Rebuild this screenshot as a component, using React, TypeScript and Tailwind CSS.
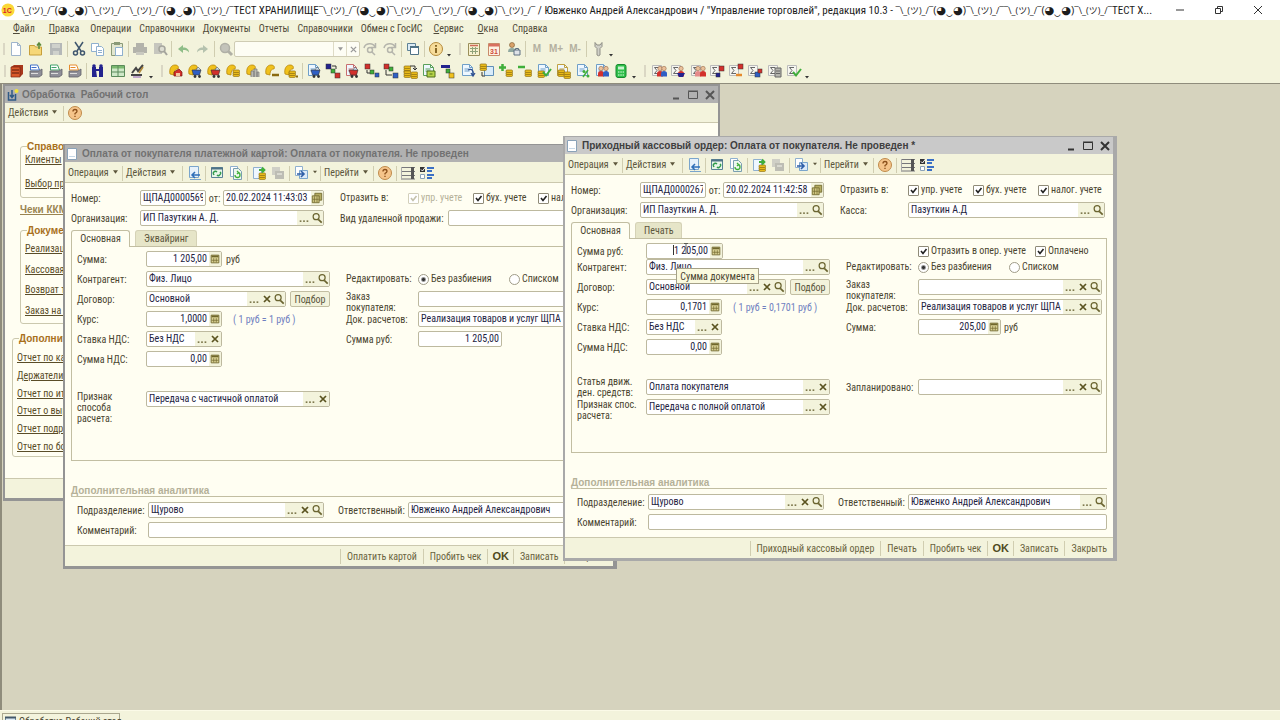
import React, { useId } from "react";
import clsx from "clsx";

type Btn = "dots" | "clear" | "find" | "calc" | "date";

const C = {
    red: "#d2302c",
    blue: "#2f5fc4",
    navy: "#23238e",
    green: "#3fae3a",
    yellow: "#f0c11c",
    orange: "#e58a2c",
};

/* ---------- icon parts, all on a 16x16 grid ---------- */

const Doc = ({ line = "#6f9fc8" }: { line?: string }) => (
    <g>
        <path d="M2.5 1.5h7l3 3v8h-10z" fill="#eef7ff" stroke={line} />
        <path d="M9.5 1.5v3h3M4.5 6h5M4.5 8h5" fill="none" stroke={line} />
    </g>
);

const Sigma = () => (
    <g>
        <path d="M1.5 2.5h9v10h-9z" fill="#f6f6f0" stroke="#bbb" />
        <path d="M8 4.5H3.5l2.5 3-2.5 3H8" fill="none" stroke="#666" />
    </g>
);

const Coin = ({ x = 8, y = 8 }: { x?: number; y?: number }) => (
    <g fill={C.yellow} stroke="#8a6a10" strokeWidth="0.7">
        <rect x={x} y={y + 4} width="6.5" height="2.4" rx="1" />
        <rect x={x} y={y + 2} width="6.5" height="2.4" rx="1" />
        <rect x={x} y={y} width="6.5" height="2.4" rx="1" />
    </g>
);

const Purse = () => (
    <path d="M2 11c-1-5 1-9 5-9 3 0 4 2 3 4-2 0-4 1-4 6z" fill={C.yellow} stroke="#b8860b" strokeWidth="0.8" />
);

const Cart = ({ c }: { c: string }) => (
    <g>
        <path d="M5 7h9l-1.500 5h-6z" fill={c} stroke="#333" strokeWidth="0.6" />
        <circle cx="8" cy="13.500" r="1.400" fill="#333" />
        <circle cx="12.500" cy="13.500" r="1.400" fill="#333" />
        <path d="M9 7l2-3 3 3z" fill="#cfe3f8" stroke="#555" strokeWidth="0.6" />
    </g>
);

const Person = ({ c, x = 8 }: { c: string; x?: number }) => (
    <g>
        <circle cx={x + 3} cy="5.500" r="2.200" fill="#eac09a" stroke="#8a5a3a" strokeWidth="0.5" />
        <path d={`M${x} 13.500v-3q0-2.500 3-2.500t3 2.500v3z`} fill={c} />
    </g>
);

const Block = ({ c, x, y, s = 5 }: { c: string; x: number; y: number; s?: number }) => (
    <rect x={x} y={y} width={s} height={s} fill={c} stroke="#333" strokeWidth="0.5" />
);

const Check = () => <path d="M7 9l3 3.500 5-6.500" fill="none" stroke={C.green} strokeWidth="2" />;

const CashBox = ({ c }: { c: string }) => (
    <g>
        <path d="M2.500 2h7l2 5h-9z" fill="#fff" stroke={c} />
        <path d="M3.500 4.500h5" stroke={c} />
        <path d="M2 8h9l3-2v6l-3 2H2z" fill="#8f8f98" stroke="#5f5f68" strokeWidth="0.8" />
        <path d="M3 10.500h7" stroke="#ddd" />
    </g>
);

function Svg({ children }: { children: React.ReactNode }) {
    return (
        <svg viewBox="0 0 16 16" className="w-4 h-4 shrink-0" aria-hidden="true">
            {children}
        </svg>
    );
}

function IconButton({ label, children }: { label: string; children: React.ReactNode }) {
    return (
        <button type="button" aria-label={label} className="w-4 h-4 shrink-0 flex items-center justify-center">
            <Svg>{children}</Svg>
        </button>
    );
}

function IconGroup({ name, icons, className }: { name: string; icons: React.ReactNode[]; className?: string }) {
    return (
        <div className={clsx("flex items-center justify-between shrink-0", className)}>
            {icons.map((icon, i) => (
                <IconButton key={i} label={`${name} ${i + 1}`}>
                    {icon}
                </IconButton>
            ))}
        </div>
    );
}

const Sep = () => (
    <span className="w-[7px] h-4 shrink-0 flex justify-center">
        <span className="w-px bg-[#d0cdb0]" />
    </span>
);

const Handle = ({ first }: { first?: boolean }) => (
    <span className={clsx("h-3 shrink-0 flex justify-center", first ? "w-2" : "w-3")}>
        <span className="w-0.5 bg-[#dad7c4]" />
    </span>
);

const More = () => (
    <button type="button" aria-label="Ещё" className="w-2.5 h-4 shrink-0 flex items-end justify-center">
        <svg viewBox="0 0 6 4" className="w-1.5 h-1">
            <path d="M1 1h4L3 3.500z" fill="#333" />
        </svg>
    </button>
);

const Caret = () => (
    <svg viewBox="0 0 6 4" className="w-[5px] h-1 ml-1 mb-0.5 inline-block">
        <path d="M0 0h6L3 4z" fill="#5c563c" />
    </svg>
);

/* ---------- main toolbars ---------- */

const fileIcons = [
    <path d="M3.500 1.500h6l3 3v10h-9z M9.500 1.500v3h3" fill="#fff" stroke="#9fb4cc" />,
    <g>
        <path d="M1.500 4.500h5l1 1.500h6v8h-12z" fill="#f6d778" stroke="#c79f3a" />
        <path d="M11 8V3M9 4.500l2-2.500 2 2.500" fill="none" stroke="#5c8a3a" strokeWidth="1.500" />
    </g>,
    <g>
        <path d="M2 2h12v12H2z" fill="#b5b8b8" />
        <path d="M4 3h8v4H4zM5 10h6v4H5z" fill="#cfd1cc" />
    </g>,
];

const editIcons = [
    <g fill="none" stroke="#3f566e" strokeWidth="1.500">
        <path d="M4 1l6 9M12 1L6 10" />
        <circle cx="4.500" cy="12" r="2" />
        <circle cx="11.500" cy="12" r="2" />
    </g>,
    <g fill="#fff" stroke="#8fb0cf">
        <path d="M1.500 2.500h7v8h-7z" />
        <path d="M6.500 5.500h5l2 2v7h-7zM8 9.500h4M8 11.500h4" />
    </g>,
    <g>
        <path d="M2.500 2.500h11v12h-11z" fill="#e2e6cf" stroke="#8a9a78" />
        <path d="M5 1h6v3H5z" fill="#8a9a78" />
        <path d="M6.500 6.500h7v8h-7z" fill="#fff" stroke="#8fb0cf" />
    </g>,
];

const printIcons = [
    <g fill="#b3b3ab">
        <path d="M4 2h8v4H4z" />
        <path d="M1 6h14v6H1z" />
        <path d="M4 11h8v3H4z" fill="#c9c9c0" />
    </g>,
    <g>
        <path d="M2 2h8v11H2z" fill="#c6c6be" />
        <circle cx="10" cy="8" r="3" fill="#ddddd2" stroke="#a5a59d" strokeWidth="1.500" />
        <path d="M12 10l3 4" stroke="#a5a59d" strokeWidth="2" />
    </g>,
];

const undoIcons = [
    <path d="M3 8l5-4v2.500c4 0 6 2 6 5-1.500-2-3-2.500-6-2.500V12z" fill="#8fbd88" />,
    <path d="M13 8L8 4v2.500c-4 0-6 2-6 5 1.500-2 3-2.500 6-2.500V12z" fill="#b5c2ae" />,
];

const findArrow = (
    <g fill="none" stroke="#b5b5ac" strokeWidth="1.500">
        <path d="M2 7c1-5 9-6 11-1M13.500 2v4.500H9" />
        <circle cx="8" cy="9" r="2.500" />
        <path d="M10 11l3 3" />
    </g>
);

const serviceIcons = [
    <g>
        <path d="M2.500 2.500h11v12h-11z" fill="#f7f1d0" stroke="#9a8f5a" />
        <path d="M4 4.500h8" stroke="#cf6a5a" strokeWidth="1.500" />
        <path d="M4 7.500h8M4 10.500h8M6.500 6v7M9.500 6v7" stroke="#8fa37a" />
    </g>,
    <g>
        <path d="M2.500 2.500h11v12h-11z" fill="#fdf2e2" stroke="#c98a6a" />
        <path d="M3 3h10v2.500H3z" fill="#d9705f" />
        <text x="4" y="13" fontSize="7" fontWeight="700" fill="#cf4a3a" fontFamily="Liberation Sans">31</text>
    </g>,
    <g>
        <circle cx="6" cy="4" r="2.500" fill="#d9a26a" stroke="#77582e" strokeWidth="0.600" />
        <path d="M2 11q0-4 4-4t4 4z" fill="#8fa8a0" />
        <path d="M8 9h6v5H8z" fill="#dfe3e8" stroke="#5f7082" />
        <path d="M9.500 9V7.500h3V9" fill="none" stroke="#5f7082" />
    </g>,
];

const deskIcons = [
    <g>
        <path d="M2 4l3-2h9v9l-3 3H2z" fill="#a8381c" />
        <path d="M2 4h9v10H2z" fill="#d95a2a" stroke="#7a240f" strokeWidth="0.700" />
        <path d="M3 7h7M3 10h7" stroke="#5a1a0a" />
    </g>,
    <CashBox c="#3f6fc8" />,
    <CashBox c="#3fa06a" />,
    <CashBox c="#e58a2c" />,
];

const viewIcons = [
    <g fill={C.navy}>
        <path d="M2 4h4v3l1 7H2zM9 4h4v10H9z" />
        <circle cx="4" cy="3" r="1.800" />
        <circle cx="11" cy="3" r="1.800" />
        <path d="M6 6h4v2H6z" />
    </g>,
    <g>
        <path d="M1.500 2.500h13v11h-13z" fill="#cfe8c8" stroke="#5a8a5a" />
        <path d="M2 3h12v2.500H2z" fill="#7ab86f" />
        <path d="M8 2v12M2 9h12" stroke="#5a8a5a" />
    </g>,
    <g>
        <path d="M1 12h11M2 10l4-5 2 3 5-6" fill="none" stroke="#444" strokeWidth="2" />
        <path d="M9 10l4-6" stroke="#b0893a" strokeWidth="1.500" />
        <path d="M3 14h8" stroke="#8c5ab8" />
    </g>,
];

const moneyIcons = [
    <g><Purse /><path d="M6 9l5-3 3 3v4H6z" fill={C.red} stroke="#7a1410" strokeWidth="0.700" /><path d="M8 10h4v3H8z" fill="#f3c9a0" /></g>,
    <g><Purse /><Cart c={C.blue} /></g>,
    <g><Purse /><Cart c={C.red} /></g>,
    <g><Purse /><Coin x={8} y={7} /></g>,
    <g><Purse /><path d="M6 14V8h3v6M9 14V6h3v8M12 14V9h2v5" fill="#b9b9b0" stroke="#777" strokeWidth="0.700" /></g>,
    <g><Purse /><path d="M8 12h7" stroke="#8a6a10" strokeWidth="2.500" /></g>,
    <g><Purse /><Coin x={6} y={8} /><path d="M13 13.500h2" stroke="#8a6a10" strokeWidth="2" /></g>,
];

const tradeIcons = [
    <g><Doc /><Cart c={C.blue} /></g>,
    <g><Block c={C.navy} x={1} y={1} /><Block c={C.green} x={6} y={6} s={4} /><Block c={C.red} x={10} y={10} /><path d="M7 3h4v3" fill="none" stroke="#333" /></g>,
    <g><Doc line="#c86f6f" /><Cart c={C.red} /></g>,
    <g><Block c={C.red} x={1} y={1} /><Block c={C.green} x={6} y={7} s={4} /><Block c={C.blue} x={11} y={10} s={4} /><path d="M3 7v3h3" fill="none" stroke="#333" /></g>,
    <g><Block c={C.red} x={1} y={1} /><Block c={C.green} x={6} y={4} s={4} /><Block c={C.blue} x={10} y={10} /><path d="M3 7v5h6" fill="none" stroke="#333" /></g>,
    <g><Coin x={2} y={3} /><Coin x={2} y={8} /><Coin x={9} y={9} /><path d="M8 3h5v4M11 5l2 2 2-2" fill="none" stroke="#333" /></g>,
    <g><Doc line="#5aa05a" /><path d="M6 8h8v6H6z" fill="#b6d34a" stroke="#4f6f1a" /><path d="M8.500 11h3" stroke="#4f6f1a" /></g>,
    <g><path d="M1 2h9v3H1z" fill={C.navy} /><Block c={C.green} x={6} y={6} s={4} /><Block c={C.yellow} x={9} y={10} /></g>,
    <g><Doc /><path d="M8 7c4-2 6 1 5 5M11 10l2 3 2-3" fill="none" stroke="#2f4f8f" strokeWidth="1.300" /></g>,
    <g><path d="M5.500 3.500h9v9h-9z" fill="#d9ecfa" stroke="#5f8fb8" /><Coin x={1} y={1} /><path d="M3 9v4h3" fill="none" stroke="#333" /></g>,
    <g><path d="M4.500 1v7M1 4.500h7" stroke={C.green} strokeWidth="2.500" /><Coin x={8} y={7} /></g>,
    <g><path d="M1 4h7" stroke={C.green} strokeWidth="2.500" /><Coin x={8} y={7} /></g>,
    <g><Doc /><Coin x={2} y={8} /><Check /></g>,
    <g><Doc line="#c0a040" /><Coin x={3} y={7} /><Coin x={9} y={9} /></g>,
    <g><Doc /><path d="M8 14l5-7" stroke={C.green} strokeWidth="1.500" /><circle cx="9" cy="8.500" r="1.500" fill={C.green} /><circle cx="13" cy="13" r="1.500" fill={C.green} /></g>,
    <g><Doc /><Person c={C.red} x={4} /><Person c={C.blue} x={9} /></g>,
    <g>
        <rect x="3" y="1.500" width="10" height="13" rx="2" fill="#2fbf4a" stroke="#178a2e" />
        <path d="M5 3.500h6v3H5z" fill="#c9f2cf" />
        <path d="M5 9h6M5 12h6" stroke="#e6ffe8" strokeDasharray="1.500 0.800" />
    </g>,
];

const reportIcons = [
    <g><Sigma /><Person c={C.red} x={6} /><Person c={C.blue} x={10} /></g>,
    <g><Sigma /><Person c={C.red} x={8} /><path d="M7 10h8l-2 4H9z" fill={C.navy} /></g>,
    <g><Sigma /><Person c="#e58a8a" x={5} /><Person c={C.red} x={10} /></g>,
    <g><Sigma /><Block c={C.red} x={10} y={3} /><Block c={C.navy} x={7} y={10} s={4} /></g>,
    <g><Sigma /><Block c={C.red} x={10} y={1} /><path d="M8 12h6" stroke={C.orange} strokeWidth="2.500" /></g>,
    <g><Sigma /><Block c={C.blue} x={8} y={9} /><Block c={C.red} x={11} y={6} s={4} /></g>,
    <g><Sigma /><path d="M8 5h6v9H8z" fill="#b5b5ae" stroke="#666" /><path d="M9 8h4M9 10.500h4" stroke="#666" /></g>,
    <g><Sigma /><Check /></g>,
];

function MainToolbars() {
    return (
        <div className="pb-px">
            <div className="flex items-center h-[22px]">
                <Handle first />
                <IconGroup name="Файл" icons={fileIcons} className="w-14" />
                <Sep />
                <IconGroup name="Правка" icons={editIcons} className="w-[54px]" />
                <Sep />
                <IconGroup name="Печать" icons={printIcons} className="w-9" />
                <Sep />
                <IconGroup name="Отмена" icons={undoIcons} className="w-9" />
                <Sep />
                <IconButton label="Найти">
                    <circle cx="7" cy="7" r="4.500" fill="#c3c3ba" stroke="#b0b0a6" strokeWidth="1.500" />
                    <path d="M10 10l4 4" stroke="#b0b0a6" strokeWidth="3" />
                </IconButton>
                <div className="flex items-stretch w-[126px] h-4 shrink-0 border border-[#cfccb4] rounded-[2px] bg-[#fdfdf4]">
                    <input aria-label="Строка поиска" className="flex-1 min-w-0 px-1 outline-none" />
                    <button type="button" aria-label="История" className="w-[13px] flex items-center justify-center border-l border-[#dedbc6]">
                        <svg viewBox="0 0 6 4" className="w-[5px] h-1"><path d="M0 0h6L3 4z" fill="#999" /></svg>
                    </button>
                    <button type="button" aria-label="Очистить" className="w-[13px] flex items-center justify-center border-l border-[#dedbc6]">
                        <svg viewBox="0 0 8 8" className="w-[7px] h-[7px]"><path d="M1 1l6 6M7 1L1 7" stroke="#999" strokeWidth="1.500" /></svg>
                    </button>
                </div>
                <IconGroup name="Искать" icons={[findArrow, findArrow]} className="w-9 ml-0.5" />
                <Sep />
                <IconButton label="Окна">
                    <path d="M2.500 2.500h8v7h-8z" fill="#dcebf5" stroke="#5f8296" />
                    <path d="M5.500 5.500h8v8h-8z" fill="#fff" stroke="#4f7286" />
                    <path d="M5 6h9" stroke="#4f7286" strokeWidth="2" />
                </IconButton>
                <Sep />
                <IconButton label="О программе">
                    <circle cx="8" cy="8" r="6.500" fill="#f6dc9a" stroke="#b58a3a" />
                    <path d="M8 7v5M8 4v1.800" stroke="#7a5a1a" strokeWidth="1.800" />
                </IconButton>
                <More />
                <Handle />
                <IconGroup name="Сервис" icons={serviceIcons} className="w-14" />
                <Sep />
                <div className="flex justify-between w-[54px] shrink-0 font-['Liberation_Sans',sans-serif] font-bold text-[10px] text-[#b3b0a0]">
                    <button type="button" className="w-4">M</button>
                    <button type="button" className="w-4">M+</button>
                    <button type="button" className="w-4">M-</button>
                </div>
                <Sep />
                <IconButton label="Настройка">
                    <path d="M5 1.500v4l2 2V14q1.500 1.500 3 0V7.500l2-2v-4l-2 2.500H7z" fill="#d0d0c8" stroke="#8f8f86" />
                </IconButton>
                <More />
            </div>
            <div className="flex items-center h-[22px] pl-px">
                <Handle first />
                <IconGroup name="Касса" icons={deskIcons} className="w-[74px]" />
                <Sep />
                <IconGroup name="Вид" icons={viewIcons} className="w-14" />
                <More />
                <Handle />
                <IconGroup name="Деньги" icons={moneyIcons} className="w-[131px]" />
                <Sep />
                <IconGroup name="Торговля" icons={tradeIcons} className="w-[323px]" />
                <More />
                <Handle />
                <IconGroup name="Отчет" icons={reportIcons} className="w-[151px]" />
                <More />
            </div>
        </div>
    );
}

const menu: [string, string, string][] = [
    ["", "Ф", "айл"],
    ["", "П", "равка"],
    ["Операции", "", ""],
    ["Справочники", "", ""],
    ["Документы", "", ""],
    ["Отчеты", "", ""],
    ["Справочники", "", ""],
    ["Обмен с ГосИС", "", ""],
    ["", "С", "ервис"],
    ["", "О", "кна"],
    ["Сп", "р", "авка"],
];

/* ---------- title of the program ---------- */

function Faces() {
    return (
        <span className="font-['Open_Sans','Noto_Sans_CJK_JP',sans-serif] text-[9px]">
            ¯\_(ツ)_/¯<span className="font-['Open_Sans','DejaVu_Serif',serif] text-[11px]">(◕‿◕)</span>¯\_(ツ)_/¯
        </span>
    );
}

function TitleBar() {
    return (
        <header className="flex items-center h-5 pr-[3px] bg-white text-[11px] text-[#1c1c1c]">
            <svg viewBox="0 0 16 16" className="w-3.5 h-3.5 ml-px mr-0.5 shrink-0" aria-hidden="true">
                <circle cx="8" cy="8" r="7.500" fill="#fbd837" />
                <text x="2" y="11" fontSize="8" fontWeight="700" fill="#d8232a" fontFamily="Liberation Sans">1С</text>
            </svg>
            <h1 className="flex-1 min-w-0 whitespace-nowrap overflow-hidden leading-5">
                <Faces /><Faces />ТЕСТ ХРАНИЛИЩЕ<Faces /><Faces /> / Ювженко Андрей Александрович / "Управление торговлей", редакция 10.3 - <Faces /><Faces />ТЕСТ Х...
            </h1>
            <div className="flex shrink-0">
                <button type="button" aria-label="Свернуть" className="w-[39px] h-5 flex items-center justify-center">
                    <svg viewBox="0 0 10 10" className="w-2.5 h-2.5"><path d="M1 5h8" stroke="#333" /></svg>
                </button>
                <button type="button" aria-label="Развернуть" className="w-[39px] h-5 flex items-center justify-center">
                    <svg viewBox="0 0 10 10" className="w-2.5 h-2.5"><path d="M1.500 3.500h5v5h-5zM3.500 3V1.500h5v5H7" fill="none" stroke="#333" /></svg>
                </button>
                <button type="button" aria-label="Закрыть" className="w-[39px] h-5 flex items-center justify-center">
                    <svg viewBox="0 0 10 10" className="w-2.5 h-2.5"><path d="M1 1l8 8M9 1L1 9" stroke="#333" /></svg>
                </button>
            </div>
        </header>
    );
}

/* ---------- form controls ---------- */

const btnArt: Record<Btn, React.ReactNode> = {
    dots: <path d="M2 10h2v1.500H2zM6 10h2v1.500H6zM10 10h2v1.500h-2z" fill="#5a5320" />,
    clear: <path d="M3.500 3.500l7 7M10.500 3.500l-7 7" stroke="#5a5320" strokeWidth="2" />,
    find: (
        <g fill="none" stroke="#6a6430">
            <circle cx="6" cy="5.500" r="3.500" strokeWidth="1.400" />
            <path d="M8.500 8.500l4 4" strokeWidth="2" />
        </g>
    ),
    calc: (
        <g>
            <path d="M2.500 2.500h9v9h-9z" fill="#d9d194" stroke="#6f672c" />
            <path d="M3 4h8" stroke="#6f672c" strokeWidth="2" />
            <path d="M5.500 6v5M8.500 6v5M3 8.500h8" stroke="#6f672c" strokeWidth="0.800" />
        </g>
    ),
    date: (
        <g>
            <path d="M4.500 1.500h8v8h-8z" fill="#b5ac62" stroke="#6f672c" />
            <path d="M1.500 4.500h8v8h-8z" fill="#cfc682" stroke="#6f672c" />
            <path d="M4 5v7M7 5v7M2 8.500h7" stroke="#6f672c" strokeWidth="0.800" />
        </g>
    ),
};

const btnName: Record<Btn, string> = {
    dots: "Выбрать",
    clear: "Очистить",
    find: "Открыть",
    calc: "Калькулятор",
    date: "Календарь",
};

function Field({ id, value = "", btns = [], num, className, name }: { id?: string; value?: string; btns?: Btn[]; num?: boolean; className?: string; name?: string }) {
    return (
        <div className={clsx("flex h-4 shrink-0 border border-[#bdb99f] rounded-[2px] bg-white overflow-hidden", className)}>
            <input
                id={id}
                aria-label={name}
                defaultValue={value}
                className={clsx("flex-1 min-w-0 px-0.5 bg-transparent outline-none text-[#23233f]", num && "text-right")}
            />
            {btns.map((b) => (
                <button key={b} type="button" aria-label={btnName[b]} className={clsx("shrink-0 bg-[#f3f3dc] flex items-center justify-center", b === "dots" ? "w-3.5" : "w-3")}>
                    <svg viewBox="0 0 14 14" className="w-3 h-3">{btnArt[b]}</svg>
                </button>
            ))}
        </div>
    );
}

interface RowProps {
    label: string[];
    value?: string;
    btns?: Btn[];
    num?: boolean;
    labelClass?: string;
    fieldClass?: string;
    middle?: boolean;
    className?: string;
    children?: React.ReactNode;
}

function Row({ label, value, btns, num, labelClass = "w-[69px]", fieldClass = "w-[184px]", middle, className, children }: RowProps) {
    const id = useId();
    return (
        <div className={clsx("flex h-4 whitespace-nowrap", middle ? "items-center" : "items-start", className)}>
            <label htmlFor={id} className={clsx("shrink-0", labelClass, label.length > 1 ? "leading-[11px]" : "leading-[18px]")}>
                {label.map((l) => (
                    <span key={l} className="block">{l}</span>
                ))}
            </label>
            <Field id={id} value={value} btns={btns} num={num} className={fieldClass} />
            {children}
        </div>
    );
}

function Tick({ label, disabled, className }: { label: string; disabled?: boolean; className?: string }) {
    return (
        <label className={clsx("flex items-center h-4 gap-0.5 shrink-0 leading-[18px]", disabled && "text-[#b5b199]", className)}>
            <span className="grid">
                <input type="checkbox" defaultChecked disabled={disabled} className="peer [grid-area:1/1] appearance-none w-[11px] h-[11px] border border-[#8f8b78] rounded-[1px] bg-white disabled:border-[#d3d0bb]" />
                <svg viewBox="0 0 11 11" className="[grid-area:1/1] w-[11px] h-[11px] pointer-events-none invisible peer-checked:visible">
                    <path d="M3 5l2 2.500 3.500-4.500" fill="none" stroke={disabled ? "#c5c2ac" : "#222"} strokeWidth="1.600" />
                </svg>
            </span>
            {label}
        </label>
    );
}

function Radio({ label, name, checked, className }: { label: string; name: string; checked?: boolean; className?: string }) {
    return (
        <label className={clsx("flex items-center h-4 gap-0.5 shrink-0 leading-[18px]", className)}>
            <input
                type="radio"
                name={name}
                defaultChecked={checked}
                className="appearance-none w-[11px] h-[11px] rounded-full border border-[#a09c88] bg-white checked:bg-[radial-gradient(circle,#333_1px,#fff_3px)]"
            />
            {label}
        </label>
    );
}

function EditMode({ name }: { name: string }) {
    return (
        <div role="radiogroup" aria-label="Редактировать" className="flex h-4 items-center whitespace-nowrap leading-[18px]">
            <span className="w-[72px] shrink-0">Редактировать:</span>
            <Radio name={name} label="Без разбиения" checked className="w-[91px]" />
            <Radio name={name} label="Списком" />
        </div>
    );
}

/* ---------- windows ---------- */

function WindowTitle({ text, active, buttons, icon }: { text: string; active?: boolean; buttons?: boolean; icon: React.ReactNode }) {
    return (
        <div className={clsx("flex items-center h-[17px] pl-px pr-px", active ? "bg-[#c9c9c9]" : "bg-[#b1b1b1]")}>
            <span className="w-4 shrink-0">{icon}</span>
            <h2 className={clsx("flex-1 font-['Liberation_Sans',sans-serif] font-bold text-[10px] leading-[18px] whitespace-pre", active ? "text-[#3f3f3f]" : "text-[#717171]")}>{text}</h2>
            {buttons && (
                <div className="flex gap-[3px]">
                    {["M3 9.500h6", "M1.500 2.500h9v7h-9zM1 2h10", "M2 2l8 8M10 2l-8 8"].map((d, i) => (
                        <button key={d} type="button" aria-label={["Свернуть", "Развернуть", "Закрыть"][i]} className="w-3.5 h-4 flex items-center justify-center">
                            <svg viewBox="0 0 12 12" className="w-3 h-3">
                                <path d={d} fill="none" stroke={active ? "#333" : "#555"} strokeWidth={i === 1 ? 1 : 2} />
                            </svg>
                        </button>
                    ))}
                </div>
            )}
        </div>
    );
}

const docIcon = (
    <svg viewBox="0 0 12 12" className="w-3 h-3">
        <path d="M1.500 0.500h9v11h-9z" fill="#fff" stroke="#8aa2b8" />
        <path d="M3 8.500h6" stroke="#c6d8e8" />
    </svg>
);

const VLine = () => <span className="w-px h-[15px] bg-[#d0cdb0]" />;

const HelpButton = () => (
    <IconButton label="Справка">
        <circle cx="8" cy="8" r="6.500" fill="#f5c48a" stroke="#bf8a4a" />
        <path d="M6 6.500q0-2 2-2t2 1.800q0 1-2 2.200v1M8 10.800v1.200" fill="none" stroke="#8a4f1a" strokeWidth="1.300" />
    </IconButton>
);

function WindowToolbar() {
    return (
        <div className="flex items-center h-[21px] pl-[3px] pt-0.5 gap-[3px] bg-[#f3f3dc] border-b border-[#cbc8ae] text-[#5c563c] whitespace-nowrap">
            <button type="button" className="w-[51px] text-left">Операция<Caret /></button>
            <VLine />
            <button type="button" className="w-[53px] text-left">Действия<Caret /></button>
            <VLine />
            <IconButton label="Записать">
                <path d="M3.500 1.500h9v11h-9z" fill="#e6f1fb" stroke="#7aa5cc" />
                <path d="M4 14.500h11" stroke="#7aa5cc" />
                <path d="M14 10H6M9 7l-3 3 3 3" fill="none" stroke="#2f6fb8" strokeWidth="1.500" />
            </IconButton>
            <VLine />
            <IconButton label="Обновить">
                <path d="M2.500 2.500h11v10h-11z" fill="#e9f6e9" stroke="#5a8296" />
                <path d="M2 3.500h12" stroke="#4f7286" strokeWidth="2" />
                <path d="M4 8q2-3 4-1M12 8q-2 4-4 2M5 10l-1-2M11 7l1 1" fill="none" stroke="#2f9a4a" strokeWidth="1.500" />
            </IconButton>
            <IconButton label="Скопировать">
                <path d="M2.500 1.500h7v10h-7z" fill="#fff" stroke="#8fb0cf" />
                <path d="M5.500 3.500h5l3 3v8h-8z" fill="#eef7ee" stroke="#7a9fb0" />
                <path d="M7 10a2.500 2.500 0 1 0 2.500-2.500M9 6l1.500 1.500L9 9" fill="none" stroke="#3fae3a" strokeWidth="1.300" />
            </IconButton>
            <VLine />
            <IconButton label="Провести">
                <path d="M2.500 2.500h8v11h-8z" fill="#eef7ff" stroke="#8fb0cf" />
                <Coin x={8} y={8} />
                <path d="M8 5h5M11 2.500L13.500 5 11 7.500" fill="none" stroke="#3fae3a" strokeWidth="1.800" />
            </IconButton>
            <IconButton label="Отменить проведение">
                <path d="M2 2h8v8H2z" fill="#cfcfc6" />
                <path d="M5 6h9v8H5z" fill="#bdbdb4" />
                <path d="M7 9h5" stroke="#d9d9d0" strokeWidth="2" />
            </IconButton>
            <VLine />
            <button type="button" aria-label="На основании" className="flex items-center w-6">
                <Svg>
                    <path d="M2.500 1.500h7v9h-7z" fill="#fff" stroke="#8fb0cf" />
                    <path d="M6.500 5.500h8v8h-8z" fill="#dceaf8" stroke="#7aa5cc" />
                    <path d="M4 9h7M8 6l3 3-3 3" fill="none" stroke="#2f5fa8" strokeWidth="1.600" />
                </Svg>
                <Caret />
            </button>
            <VLine />
            <button type="button" className="w-[46px] text-left">Перейти<Caret /></button>
            <VLine />
            <HelpButton />
            <VLine />
            <IconButton label="Список">
                <path d="M1 2.500h14M1 6.500h14M1 10.500h14M1 14h14" stroke="#77777a" />
                <path d="M12.500 2v12" stroke="#555" strokeWidth="3" />
                <path d="M1.500 2v12" stroke="#aaa" />
            </IconButton>
            <IconButton label="Настройка списка">
                <path d="M1.500 9.500h4v4h-4z" fill="#fff" stroke="#8aa2b8" />
                <path d="M1 2h5v5H1z" fill="#333" />
                <path d="M2 4.500l1.500 1.500 3-4" fill="none" stroke="#fff" />
                <path d="M8 3h7M8 6h5M8 10h7M8 13h5" stroke="#3a6fc4" strokeWidth="1.800" />
            </IconButton>
        </div>
    );
}

interface DocumentWindowProps {
    title: string;
    active?: boolean;
    number: string;
    date: string;
    tabs: [string, string];
    headerSide: React.ReactNode;
    left: React.ReactNode;
    right: React.ReactNode;
    actions: string[];
    className: string;
    children?: React.ReactNode;
}

function DocumentWindow({ title, active, number, date, tabs, headerSide, left, right, actions, className, children }: DocumentWindowProps) {
    return (
        <section
            className={clsx(
                "absolute w-[554px] flex flex-col bg-[#fffef2] border-t border-l-2 border-r-4 border-b-3",
                active ? "border-[#a9a9a9]" : "border-[#949494]",
                className
            )}
        >
            <WindowTitle text={title} active={active} buttons={active} icon={docIcon} />
            <WindowToolbar />
            <div className="px-1.5 pt-[7px] pb-[7px]">
                <div className="flex">
                    <div className="w-[269px] shrink-0 flex flex-col gap-1">
                        <Row label={["Номер:"]} value={number} fieldClass="w-[66px]">
                            <span className="leading-[18px] w-[17px] text-center shrink-0">от:</span>
                            <Field name="Дата" value={date} btns={["date"]} className="w-[101px]" />
                        </Row>
                        <Row label={["Организация:"]} value="ИП Пазуткин А. Д." btns={["dots", "find"]} />
                    </div>
                    <div className="flex-1 min-w-0 flex flex-col gap-1">
                        <div className="flex h-4 items-center whitespace-nowrap leading-[18px]">
                            <span className="w-[68px] shrink-0">Отразить в:</span>
                            <Tick label="упр. учете" disabled={!active} className="w-[65px]" />
                            <Tick label="бух. учете" className="w-[65px]" />
                            <Tick label="налог. учете" />
                        </div>
                        {headerSide}
                    </div>
                </div>
                <div role="tablist" className="flex items-end gap-[5px] mt-1">
                    <button type="button" role="tab" aria-selected="true" className="h-[17px] -mb-px px-2 w-[59px] bg-[#fffef2] border border-b-0 border-[#c2bea2] rounded-t-[3px]">
                        {tabs[0]}
                    </button>
                    <button type="button" role="tab" aria-selected="false" className="h-4 px-2 bg-[#e6e5c8] text-[#5c563c] border border-b-0 border-[#d5d2b6] rounded-t-[3px]">
                        {tabs[1]}
                    </button>
                </div>
                <div className="flex h-[215px] pl-[5px] pt-1 border border-[#c2bea2]">
                    <div className="w-[269px] shrink-0 flex flex-col gap-1">{left}</div>
                    <div className="flex-1 min-w-0 flex flex-col gap-1">{right}</div>
                </div>
                <h3 className="mt-[23px] h-[13px] leading-[14px] font-['Liberation_Sans',sans-serif] font-bold text-[10px] text-[#b5b199] border-b border-[#c2bea2]">Дополнительная аналитика</h3>
                <div className="mt-[5px] pl-1.5 flex flex-col gap-1">
                    <div className="flex">
                        <Row label={["Подразделение:"]} value="Щурово" btns={["dots", "clear", "find"]} labelClass="w-[71px]" fieldClass="w-[176px]" className="w-[261px] shrink-0" />
                        <Row label={["Ответственный:"]} value="Ювженко Андрей Александрович" btns={["dots", "find"]} labelClass="w-[70px]" fieldClass="flex-1" className="flex-1" />
                    </div>
                    <Row label={["Комментарий:"]} labelClass="w-[71px]" fieldClass="flex-1" />
                </div>
            </div>
            <div className="flex items-center justify-end h-[21px] pr-1.5 bg-[#f3f3dc] border-t border-[#cbc8ae] text-[#6a6440]">
                {actions.map((a, i) => (
                    <button
                        key={a}
                        type="button"
                        className={clsx(
                            "h-[15px] leading-[15px] whitespace-nowrap border-l border-[#d0cdb0]",
                            a === "OK" ? "px-1 font-['Liberation_Sans',sans-serif] font-bold text-[11px] text-[#4f4a20]" : "pl-1.5",
                            a !== "OK" && i < actions.length - 1 && "pr-1.5"
                        )}
                    >
                        {a}
                    </button>
                ))}
            </div>
            {children}
        </section>
    );
}

function PickButton() {
    return (
        <button type="button" className="ml-1 h-4 w-10 leading-[15px] border border-[#c2bea2] rounded-[2px] bg-[#f3f3dc] text-[#5c563c]">Подбор</button>
    );
}

function Rate({ text }: { text: string }) {
    return <span className="leading-[18px] ml-[11px] text-[#6f7fc0]">{text}</span>;
}

function PaymentCardWindow() {
    return (
        <DocumentWindow
            title="Оплата от покупателя платежной картой: Оплата от покупателя. Не проведен"
            number="ЩПАД0000569"
            date="20.02.2024 11:43:03"
            tabs={["Основная", "Эквайринг"]}
            actions={["Оплатить картой", "Пробить чек", "OK", "Записать", "Закрыть"]}
            className="left-[61px] top-[60px]"
            headerSide={<Row label={["Вид удаленной продажи:"]} labelClass="w-[108px]" fieldClass="flex-1" />}
            left={
                <>
                    <Row label={["Сумма:"]} value="1 205,00" num btns={["calc"]} fieldClass="w-[76px]">
                        <span className="leading-[18px] ml-1">руб</span>
                    </Row>
                    <Row label={["Контрагент:"]} value="Физ. Лицо" btns={["dots", "find"]} />
                    <Row label={["Договор:"]} value="Основной" btns={["dots", "clear", "find"]} fieldClass="w-[140px]">
                        <PickButton />
                    </Row>
                    <Row label={["Курс:"]} value="1,0000" num btns={["calc"]} fieldClass="w-[76px]">
                        <Rate text="( 1 руб = 1 руб )" />
                    </Row>
                    <Row label={["Ставка НДС:"]} value="Без НДС" btns={["dots", "clear"]} fieldClass="w-[76px]" />
                    <Row label={["Сумма НДС:"]} value="0,00" num btns={["calc"]} fieldClass="w-[76px]" />
                    <Row label={["Признак", "способа", "расчета:"]} value="Передача с частичной оплатой" btns={["dots", "clear"]} className="mt-5" />
                </>
            }
            right={
                <>
                    <div className="h-4" />
                    <EditMode name="card-mode" />
                    <Row label={["Заказ", "покупателя:"]} labelClass="w-[72px]" btns={["dots", "clear", "find"]} />
                    <Row label={["Док. расчетов:"]} value="Реализация товаров и услуг ЩПАД00" labelClass="w-[72px]" btns={["dots", "clear", "find"]} />
                    <Row label={["Сумма руб:"]} value="1 205,00" num labelClass="w-[72px]" fieldClass="w-[84px]" />
                </>
            }
        />
    );
}

function CashOrderWindow() {
    return (
        <DocumentWindow
            active
            title="Приходный кассовый ордер: Оплата от покупателя. Не проведен *"
            number="ЩПАД0000267"
            date="20.02.2024 11:42:58"
            tabs={["Основная", "Печать"]}
            actions={["Приходный кассовый ордер", "Печать", "Пробить чек", "OK", "Записать", "Закрыть"]}
            className="left-[561px] top-[52px]"
            headerSide={<Row label={["Касса:"]} value="Пазуткин А.Д" btns={["dots", "find"]} labelClass="w-[68px]" fieldClass="w-[197px]" />}
            left={
                <>
                    <Row label={["Сумма руб:"]} value="1 205,00" num btns={["calc"]} fieldClass="w-[77px]" />
                    <Row label={["Контрагент:"]} value="Физ. Лицо" btns={["dots", "find"]} className="-mt-1" />
                    <Row label={["Договор:"]} value="Основной" btns={["dots", "clear", "find"]} fieldClass="w-[140px]">
                        <PickButton />
                    </Row>
                    <Row label={["Курс:"]} value="0,1701" num btns={["calc"]} fieldClass="w-[76px]">
                        <Rate text="( 1 руб = 0,1701 руб )" />
                    </Row>
                    <Row label={["Ставка НДС:"]} value="Без НДС" btns={["dots", "clear"]} fieldClass="w-[76px]" />
                    <Row label={["Сумма НДС:"]} value="0,00" num btns={["calc"]} fieldClass="w-[76px]" />
                    <Row label={["Статья движ.", "ден. средств:"]} value="Оплата покупателя" btns={["dots", "clear"]} middle className="mt-5" />
                    <Row label={["Признак спос.", "расчета:"]} value="Передача с полной оплатой" btns={["dots", "clear"]} />
                </>
            }
            right={
                <>
                    <div className="flex h-4 pl-[72px] whitespace-nowrap">
                        <Tick label="Отразить в опер. учете" className="w-[117px]" />
                        <Tick label="Оплачено" />
                    </div>
                    <div className="-mt-1">
                        <EditMode name="order-mode" />
                    </div>
                    <Row label={["Заказ", "покупателя:"]} labelClass="w-[72px]" btns={["dots", "clear", "find"]} />
                    <Row label={["Док. расчетов:"]} value="Реализация товаров и услуг ЩПАД00" labelClass="w-[72px]" btns={["dots", "clear", "find"]} />
                    <Row label={["Сумма:"]} value="205,00" num btns={["calc"]} labelClass="w-[72px]" fieldClass="w-[83px]">
                        <span className="leading-[18px] ml-[3px]">руб</span>
                    </Row>
                    <Row label={["Запланировано:"]} labelClass="w-[72px]" btns={["dots", "clear", "find"]} className="mt-10" />
                </>
            }
        >
            {/* text cursor, mouse pointer and the hint under it */}
            <span className="absolute left-[108px] top-[108px] w-px h-2.5 bg-[#333]" />
            <svg viewBox="0 0 6 12" className="absolute left-[118px] top-[106px] w-1.5 h-3" aria-hidden="true">
                <path d="M1 0.500h4M3 1v10" stroke="#444" strokeWidth="0.800" />
            </svg>
            <div role="tooltip" className="absolute left-[111px] top-[131px] h-4 w-[83px] leading-[15px] text-center bg-[#fbfadf] border border-[#a5a188] text-[#4a4530] whitespace-nowrap">
                Сумма документа
            </div>
        </DocumentWindow>
    );
}

function LinkGroup({ legend, links, className }: { legend: string; links: string[]; className?: string }) {
    return (
        <section className={clsx("relative w-60 border border-[#cbc8ae] rounded-[3px]", className)}>
            <h3 className="absolute -top-2 left-1.5 leading-4 font-['Liberation_Sans',sans-serif] font-bold text-[10px] text-[#a8701c] bg-[#fffef2]">{legend}</h3>
            <ul className="flex flex-col justify-between h-full items-start">
                {links.map((l) => (
                    <li key={l} className="leading-3">
                        <a href="#" className="underline">{l}</a>
                    </li>
                ))}
            </ul>
        </section>
    );
}

function DesktopWindow() {
    return (
        <section className="absolute left-px top-0 w-[717px] flex flex-col bg-[#fffef2] border-2 border-b-3 border-[#949494]">
            <WindowTitle
                text="Обработка  Рабочий стол"
                buttons
                icon={
                    <svg viewBox="0 0 14 14" className="w-3.5 h-3.5">
                        <path d="M2.500 4v8h7V6" fill="none" stroke="#2f5a86" strokeWidth="1.500" />
                        <path d="M6 2v7M4 7l2 2.500L8 7" fill="none" stroke="#2f5a86" strokeWidth="1.500" />
                        <circle cx="10.500" cy="3" r="2" fill="#f2e43a" />
                    </svg>
                }
            />
            <div className="flex items-center h-5 pl-[3px] pt-px gap-[3px] bg-[#f3f3dc] border-b border-[#cbc8ae] text-[#5c563c]">
                <button type="button" className="w-[52px] text-left">Действия<Caret /></button>
                <VLine />
                <HelpButton />
            </div>
            <div className="pt-[23px] pb-[21px] px-[7px] text-[#5a4d28]">
                <LinkGroup legend="Справочники" links={["Клиенты", "Выбор прайса"]} className="ml-2 h-[52px] pl-1 pt-[7px] pb-[7px]" />
                <a href="#" className="block w-max ml-2 mt-1 font-['Liberation_Sans',sans-serif] font-bold text-[10px] leading-4 underline text-[#9a8450]">Чеки ККМ</a>
                <LinkGroup legend="Документы" links={["Реализация", "Кассовая смена", "Возврат товара", "Заказ на сборку"]} className="ml-2 mt-3 h-[94px] pl-1 pt-3 pb-1.5" />
                <LinkGroup legend="Дополнительно" links={["Отчет по кассе", "Держатели карт", "Отчет по итогам", "Отчет о выручке", "Отчет подробный", "Отчет по бонусам"]} className="mt-3.5 h-[119px] pl-1 pt-[13px] pb-[3px]" />
            </div>
            <div className="h-5 bg-[#f3f3dc] border-t border-[#cbc8ae]" />
        </section>
    );
}

export default function App() {
    return (
        <div className="flex flex-col h-screen overflow-hidden bg-[#f3f3dc] font-['Roboto_Condensed','Roboto',sans-serif] text-[10px] leading-4 text-[#4a4530]">
            <TitleBar />
            <nav className="flex items-center h-[18px] pl-1.5 text-[#4f4a38]">
                {menu.map(([a, key, b], i) => (
                    <button key={i} type="button" className={clsx("shrink-0", key ? "px-[7px]" : "px-1")}>
                        {a}
                        {key && <u>{key}</u>}
                        {b}
                    </button>
                ))}
            </nav>
            <MainToolbars />
            <main className="relative flex-1 min-h-0 overflow-hidden bg-[#d6d3be] border-t border-l-2 border-[#8f8c7c]">
                <DesktopWindow />
                <PaymentCardWindow />
                <CashOrderWindow />
            </main>
            <footer className="h-2.5 shrink-0 px-0.5 pt-0.5 border-t border-[#fbfae8]">
                <button type="button" className="flex items-center gap-0.5 w-[118px] h-[18px] px-0.5 border border-[#aaa78f] text-left whitespace-nowrap">
                    <svg viewBox="0 0 12 12" className="w-3 h-3 shrink-0" aria-hidden="true">
                        <path d="M0.500 1.500h10v9h-10z" fill="#dceaf5" stroke="#6f8c9c" />
                        <path d="M0 1.500h11" stroke="#44586a" strokeWidth="2" />
                    </svg>
                    Обработка  Рабочий стол
                </button>
            </footer>
        </div>
    );
}
